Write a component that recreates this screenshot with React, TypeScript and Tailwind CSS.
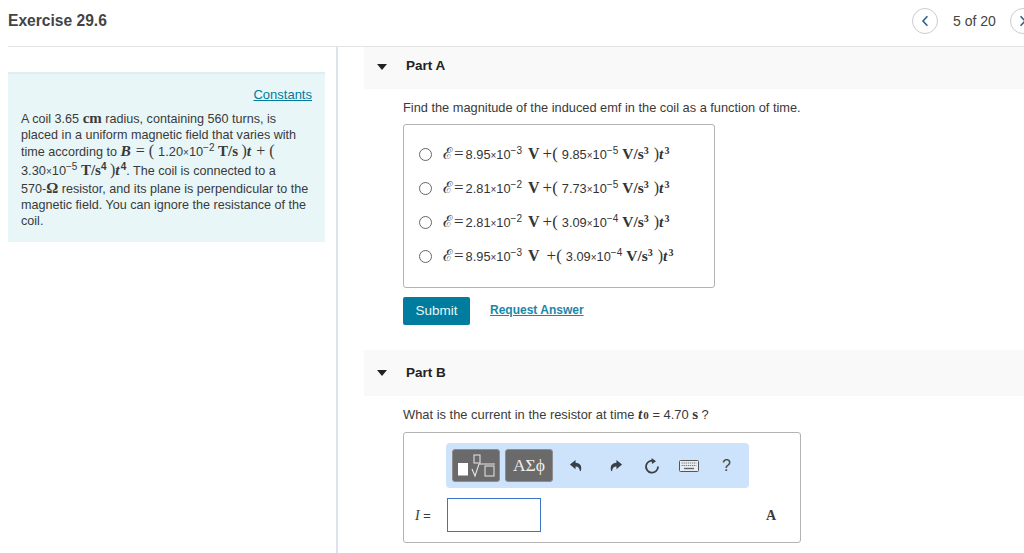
import React from "react";

const serif = "font-['Liberation_Serif',serif]";

const M = ({ children }: { children: React.ReactNode }) => (
  <span className="font-['Liberation_Serif',serif] font-bold text-[15px]">{children}</span>
);
const I = ({ children }: { children: React.ReactNode }) => (
  <span className="font-['Liberation_Serif',serif] font-bold italic text-[15.5px] pr-[1px]">{children}</span>
);
const P = ({ children }: { children: React.ReactNode }) => (
  <span className="font-['Liberation_Serif',serif] text-[16px]">{children}</span>
);
const Sup = ({ children }: { children: React.ReactNode }) => (
  <sup className="text-[10px] leading-none align-baseline relative -top-[5px]">{children}</sup>
);
const Sci = ({ v, e }: { v: string; e: string }) => (
  <span className="font-['Liberation_Sans',sans-serif] text-[12.8px] font-normal not-italic">
    {v}
    <span className="text-[10px]">×</span>10<Sup>{e}</Sup>
  </span>
);

const Option = ({ a, ae, b, be, wide }: { a: string; ae: string; b: string; be: string; wide?: boolean }) => (
  <div className="flex items-center h-[34px]">
    <span className="w-[13px] h-[13px] rounded-full border-[1.5px] border-[#666] bg-white mr-[11px] shrink-0" />
    <span className="whitespace-nowrap text-[#333] font-['Liberation_Serif',serif] text-[15px]">
      <span className="font-['DejaVu_Serif',serif] text-[16px] mr-[1px]">ℰ</span>
      <span className="text-[17px] mr-[2px]">=</span>
      <Sci v={a} e={ae} />
      <span className="font-bold text-[16px] ml-[6px]">V</span>
      <span className={`text-[17px] ${wide ? "ml-[7px]" : "ml-[3px]"}`}>+(</span>
      <span className="ml-[4px]"><Sci v={b} e={be} /></span>
      <span className="font-bold text-[15.5px] ml-[4px]">V/s</span>
      <Sup><b>3</b></Sup>
      <span className="text-[16px] ml-[5px]">)</span>
      <I>t</I>
      <Sup><b>3</b></Sup>
    </span>
  </div>
);

const PartHeader = ({ label, clipped }: { label: string; clipped?: boolean }) => (
  <div className={`flex items-center bg-[#f9f9f9] pl-[13px] ${clipped ? "h-[42px] pb-[3px]" : "h-[46px]"}`}>
    <span className="w-0 h-0 border-x-[5px] border-x-transparent border-t-[6px] border-t-[#222]" />
    <span className="ml-[19px] text-[13.5px] font-bold text-[#222]">{label}</span>
  </div>
);

const Undo = ({ flip }: { flip?: boolean }) => (
  <svg viewBox="0 0 16 16" className={`w-[15px] h-[15px] ${flip ? "-scale-x-100" : ""}`}>
    <path d="M7 2 1 7l6 5V9c2.6 0 4 1 4.6 4.6.2.6.9.6 1.1 0C14 8.4 12 5.3 7 5z" fill="#3a3f45" />
  </svg>
);

export default function App() {
  return (
    <div className={`w-[1024px] h-[553px] overflow-hidden bg-white font-['Liberation_Sans',sans-serif] text-[#3a3a3a] text-[12.8px]`}>
      <header className="h-[47px] ml-[8px] flex items-center justify-between border-b border-[#e2e4e6] pb-[5px]">
        <h1 className="text-[15.6px] font-bold text-[#444] leading-none">Exercise 29.6</h1>
        <div className="flex items-center w-[112px] shrink-0 overflow-hidden">
          <span className="w-[26px] h-[26px] rounded-full border border-[#ccc] flex items-center justify-center shrink-0">
            <svg viewBox="0 0 10 14" className="w-[8px] h-[12px]"><path d="M8 1 2.5 7 8 13" fill="none" stroke="#2f5f8a" strokeWidth="2" /></svg>
          </span>
          <span className="ml-[15px] mt-[2px] text-[14px] text-[#444] whitespace-nowrap shrink-0">5 of 20</span>
          <span className="ml-[14px] w-[26px] h-[26px] rounded-full border border-[#ccc] flex items-center justify-center shrink-0">
            <svg viewBox="0 0 10 14" className="w-[8px] h-[12px]"><path d="M2 1 7.5 7 2 13" fill="none" stroke="#2f5f8a" strokeWidth="2" /></svg>
          </span>
        </div>
      </header>

      <div className="flex h-[506px]">
        <aside className="w-[338px] shrink-0 border-r-2 border-[#dde3ee] pl-[8px] pr-[11px] pt-[25px]">
          <div className="h-[170px] bg-[#e8f6f7] border-t-2 border-[#e1eef0] pl-[13px] pr-[13px] pt-[13px]">
            <div className="text-right text-[13px] leading-[16px]">
              <a className="text-[#007c9e] underline">Constants</a>
            </div>
            <p className="mt-[7px] text-[12.6px] leading-[16.2px] whitespace-nowrap">
              A coil 3.65 <M>cm</M> radius, containing 560 turns, is<br />
              placed in a uniform magnetic field that varies with<br />
              time according to <I>B</I><P>{" = ( "}</P><Sci v="1.20" e="−2" /> <M>T/s</M> <P>)</P><I>t</I><P>{" + ("}</P><br />
              <Sci v="3.30" e="−5" /> <M>T/s</M><Sup><b>4</b></Sup> <P>)</P><I>t</I><Sup><b>4</b></Sup>. The coil is connected to a<br />
              570-<M>Ω</M> resistor, and its plane is perpendicular to the<br />
              magnetic field. You can ignore the resistance of the<br />
              coil.
            </p>
          </div>
        </aside>

        <main className="flex-1 pl-[26px]">
          <PartHeader label="Part A" clipped />
          <div className="pl-[39px]">
            <p className="mt-[10px] text-[12.8px] leading-[17px]">Find the magnitude of the induced emf in the coil as a function of time.</p>
            <div className="mt-[8px] w-[312px] h-[164px] border border-[#b3b3b3] rounded-[3px] pl-[15px] pt-[12px]">
              <Option a="8.95" ae="−3" b="9.85" be="−5" />
              <Option a="2.81" ae="−2" b="7.73" be="−5" />
              <Option a="2.81" ae="−2" b="3.09" be="−4" />
              <Option a="8.95" ae="−3" b="3.09" be="−4" wide />
            </div>
            <div className="mt-[9px] flex items-start">
              <button className="w-[67px] h-[28px] bg-[#007c9e] text-[#e8f6f7] text-[13.5px] rounded-[2px]">Submit</button>
              <a className="ml-[20px] text-[12px] font-bold text-[#1a87a8] underline leading-[26px]">Request Answer</a>
            </div>
          </div>
          <div className="mt-[25px]"><PartHeader label="Part B" /></div>
          <div className="pl-[39px]">
            <p className="mt-[9px] text-[12.9px] leading-[17px]">
              What is the current in the resistor at time <I>t</I><span className={`${serif} font-bold text-[11px]`}>0</span> = 4.70 <M>s</M> ?
            </p>
            <div className="mt-[8px] w-[398px] h-[111px] border border-[#b3b3b3] rounded-[3px] pl-[11px] pt-[10px]">
              <div className="ml-[31px] w-[303px] h-[45px] bg-[#cde3fc] rounded-[4px] flex items-center pl-[6px]">
                <span className="w-[48px] h-[33px] rounded-[3px] bg-[#6a6a6a] border border-[#8d8d8d] flex items-center justify-center shrink-0">
                  <svg viewBox="0 0 44 26" className="w-[44px] h-[26px]">
                    <rect x="4" y="10" width="10" height="12.5" fill="#fff" />
                    <rect x="20" y="2" width="6" height="8" fill="none" stroke="#e8e8e8" />
                    <path d="M18 16l3 7 4-12h16" fill="none" stroke="#e8e8e8" strokeWidth="1.1" />
                    <rect x="31" y="13" width="9" height="10" fill="none" stroke="#e8e8e8" />
                  </svg>
                </span>
                <span className={`ml-[5px] w-[48px] h-[33px] rounded-[3px] bg-[#6a6a6a] border border-[#8d8d8d] flex items-center justify-center ${serif} text-[17.5px] text-[#eee] shrink-0`}>ΑΣϕ</span>
                <span className="ml-[16px] flex"><Undo /></span>
                <span className="ml-[24px] flex"><Undo flip /></span>
                <svg viewBox="0 0 16 16" className="ml-[21px] w-[16px] h-[16px]">
                  <path d="M10.5 3.2A6 6 0 1 0 14 8.5" fill="none" stroke="#3a3f45" strokeWidth="1.8" />
                  <path d="M7.5 0l4.5 3.2L8 6z" fill="#3a3f45" />
                </svg>
                <svg viewBox="0 0 20 12" className="ml-[19px] w-[20px] h-[12px]">
                  <rect x=".5" y=".5" width="19" height="11" rx="1" fill="#e6edf5" stroke="#555" />
                  <path d="M2.5 3h15M2.5 5.5h15" stroke="#777" strokeWidth="1.2" strokeDasharray="1.3 .8" />
                  <path d="M5 8.5h10" stroke="#666" strokeWidth="1.4" />
                </svg>
                <span className="ml-[23px] text-[16px] text-[#444]">?</span>
              </div>
              <div className="mt-[10px] flex items-center h-[34px]">
                <span className="w-[32px] whitespace-nowrap"><span className={`${serif} italic text-[14px]`}>I</span> =</span>
                <span className="w-[94px] h-[34px] border border-[#3f73c8] bg-white shrink-0" />
                <span className={`ml-[225px] ${serif} font-bold text-[14px]`}>A</span>
              </div>
            </div>
          </div>
        </main>
      </div>
    </div>
  );
}
